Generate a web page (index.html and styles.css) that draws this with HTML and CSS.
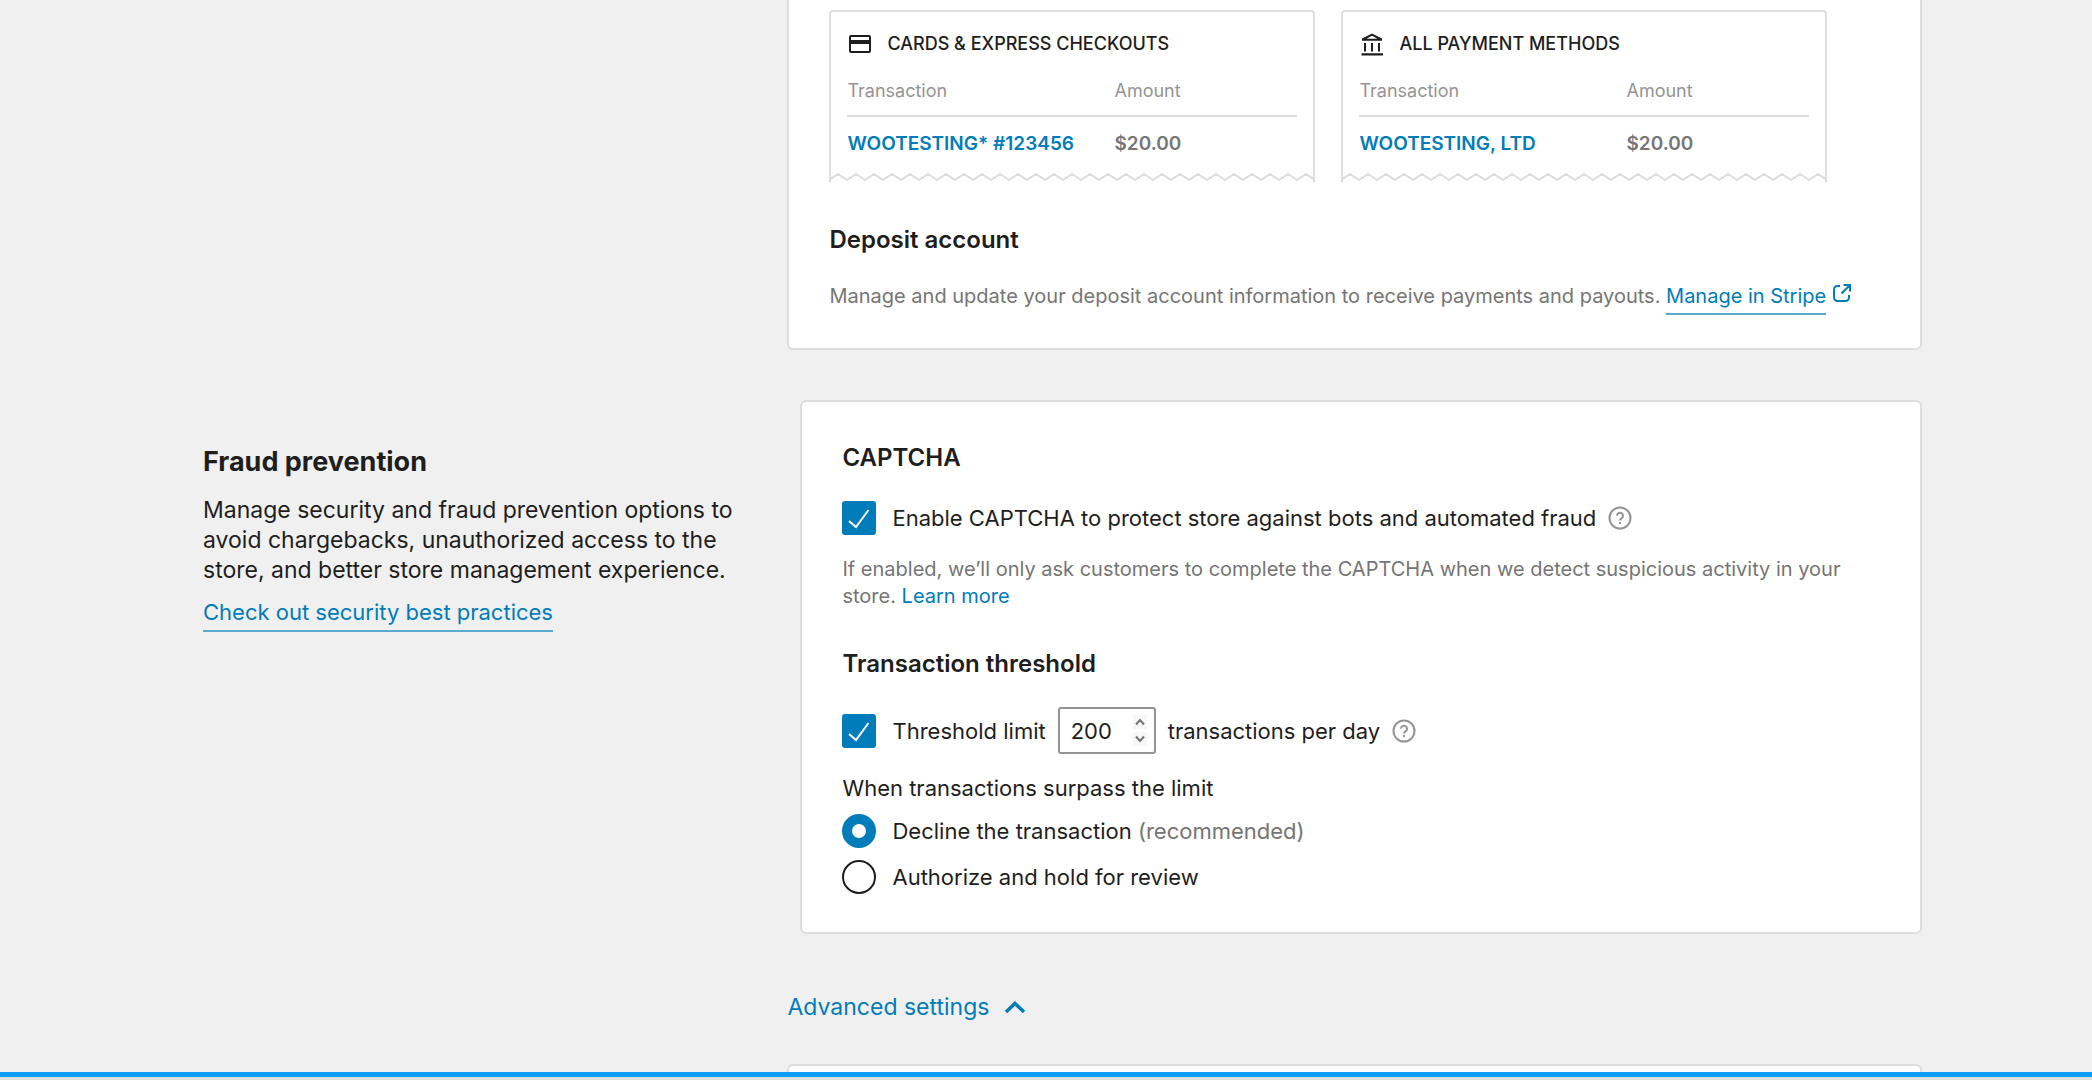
FILE: index.html
```html
<!DOCTYPE html>
<html lang="en">

<head>
    <meta charset="UTF-8">
    <meta name="viewport" content="width=device-width, initial-scale=1.0">
    <title>Payments settings</title>
    <link rel="stylesheet" href="styles.css">
</head>

<body>

    <main class="page">
        <!-- Deposits -->
        <section class="section">
            <div class="section-main">
                <div class="card card-continued">
                    <div class="receipts">
                        <div class="receipt">
                            <h4 class="receipt-title">
                                <svg class="icon" viewBox="0 0 26 26" width="26" height="26" aria-hidden="true">
                                    <path fill="currentColor" fill-rule="evenodd" d="M4 4h18a2 2 0 0 1 2 2v14a2 2 0 0 1-2 2H4a2 2 0 0 1-2-2V6a2 2 0 0 1 2-2zM4 6v3h18V6zM4 13v7h18v-7z"/>
                                </svg>
                                CARDS &amp; EXPRESS CHECKOUTS
                            </h4>
                            <table class="receipt-table">
                                <thead>
                                    <tr><th>Transaction</th><th>Amount</th></tr>
                                </thead>
                                <tbody>
                                    <tr><td class="descriptor">WOOTESTING* #123456</td><td>$20.00</td></tr>
                                </tbody>
                            </table>
                            <svg class="zigzag" aria-hidden="true">
                                <defs>
                                    <pattern id="teeth" width="18" height="10" patternUnits="userSpaceOnUse">
                                        <path d="M-9 2L0 8L9 2L18 8L27 2" fill="none" stroke="#ddd" stroke-width="2" stroke-linejoin="round"/>
                                    </pattern>
                                </defs>
                                <rect width="100%" height="10" fill="url(#teeth)"/>
                            </svg>
                        </div>

                        <div class="receipt">
                            <h4 class="receipt-title">
                                <svg class="icon" viewBox="0 0 26 26" width="26" height="26" aria-hidden="true">
                                    <path fill="currentColor" fill-rule="evenodd" d="M13 2.500L23 7.500V9.800H3V7.500zM13 4.800L7.500 7.800H18.500zM5 12h2v8.500H5zM12 12h2v8.500h-2zM19 12h2v8.500h-2zM2.500 22.200h21.500v2.300H2.500z"/>
                                </svg>
                                ALL PAYMENT METHODS
                            </h4>
                            <table class="receipt-table">
                                <thead>
                                    <tr><th>Transaction</th><th>Amount</th></tr>
                                </thead>
                                <tbody>
                                    <tr><td class="descriptor">WOOTESTING, LTD</td><td>$20.00</td></tr>
                                </tbody>
                            </table>
                            <svg class="zigzag" aria-hidden="true">
                                <rect width="100%" height="10" fill="url(#teeth)"/>
                            </svg>
                        </div>
                    </div>

                    <h3 class="card-title">Deposit account</h3>
                    <p class="help-text">
                        Manage and update your deposit account information to receive payments and payouts.
                        <a class="link-underlined" href="#">Manage in Stripe</a>
                        <svg class="external" viewBox="0 0 20 20" width="20" height="20" aria-hidden="true">
                            <path d="M8 3H5.500A3.500 3.500 0 0 0 2 6.500v8A3.500 3.500 0 0 0 5.500 18h8A3.500 3.500 0 0 0 17 14.500V12M11.500 2H18V8.500M18 2L9.500 10.500" fill="none" stroke="currentColor" stroke-width="2"/>
                        </svg>
                    </p>
                </div>
            </div>
        </section>

        <!-- Fraud prevention -->
        <section class="section">
            <div class="section-info">
                <h2>Fraud prevention</h2>
                <p>Manage security and fraud prevention options to avoid chargebacks, unauthorized access to the store, and better store management experience.</p>
                <a class="link-underlined" href="#">Check out security best practices</a>
            </div>
            <div class="section-main section-main-inset">
                <div class="card">
                    <h3 class="card-title">CAPTCHA</h3>
                    <div class="field">
                        <input type="checkbox" class="checkbox" id="captcha" checked>
                        <label for="captcha">Enable CAPTCHA to protect store against bots and automated fraud</label>
                        <button type="button" class="help" aria-label="About CAPTCHA">
                            <svg viewBox="0 0 24 24" width="24" height="24" aria-hidden="true">
                                <circle cx="12" cy="12" r="10.500"/>
                                <path d="M9 9.700a3 3 0 1 1 4.500 2.600c-1 .6-1.500 1-1.500 2.200M12 16v2"/>
                            </svg>
                        </button>
                    </div>
                    <p class="help-text">If enabled, we’ll only ask customers to complete the CAPTCHA when we detect suspicious activity in your store. <a href="#">Learn more</a></p>

                    <h3 class="card-title card-title-spaced">Transaction threshold</h3>
                    <div class="field">
                        <input type="checkbox" class="checkbox" id="threshold" checked>
                        <label for="threshold">Threshold limit</label>
                        <span class="number">
                            <input type="number" id="limit" value="200" aria-label="Transactions per day">
                            <span class="stepper">
                                <button type="button" id="stepUp" aria-label="Increase">
                                    <svg viewBox="0 0 14 14" width="14" height="14" aria-hidden="true"><path d="M3 9.500L7 5L11 9.500"/></svg>
                                </button>
                                <button type="button" id="stepDown" aria-label="Decrease">
                                    <svg viewBox="0 0 14 14" width="14" height="14" aria-hidden="true"><path d="M3 4.500L7 9L11 4.500"/></svg>
                                </button>
                            </span>
                        </span>
                        <label for="limit">transactions per day</label>
                        <button type="button" class="help" aria-label="About the threshold">
                            <svg viewBox="0 0 24 24" width="24" height="24" aria-hidden="true">
                                <circle cx="12" cy="12" r="10.500"/>
                                <path d="M9 9.700a3 3 0 1 1 4.500 2.600c-1 .6-1.500 1-1.500 2.200M12 16v2"/>
                            </svg>
                        </button>
                    </div>

                    <fieldset class="options">
                        <legend>When transactions surpass the limit</legend>
                        <div class="field">
                            <input type="radio" class="radio" name="surpass" id="decline" checked>
                            <label for="decline">Decline the transaction <span class="muted">(recommended)</span></label>
                        </div>
                        <div class="field">
                            <input type="radio" class="radio" name="surpass" id="hold">
                            <label for="hold">Authorize and hold for review</label>
                        </div>
                    </fieldset>
                </div>
            </div>
        </section>

        <!-- Advanced settings -->
        <section class="section section-last">
            <div class="section-main">
                <button type="button" class="toggle">
                    Advanced settings
                    <svg viewBox="0 0 22 14" width="22" height="14" aria-hidden="true">
                        <path d="M2 12L11 3.500L20 12" fill="none" stroke="currentColor" stroke-width="3.500"/>
                    </svg>
                </button>
                <div class="card card-cut"></div>
            </div>
        </section>
    </main>

    <footer class="bottom-bar"></footer>

    <script>
        const limit = document.getElementById('limit');

        document.getElementById('stepUp').onclick = () => limit.stepUp();
        document.getElementById('stepDown').onclick = () => limit.stepDown();
    </script>
</body>

</html>
```
FILE: styles.css
```css
/* General styles */
* {
    box-sizing: border-box;
}

body {
    font-family: 'Inter', sans-serif;
    font-size: 22px;
    line-height: 30px;
    color: #1e1e1e;
    background-color: #f0f0f0;
    margin: 0;
    min-height: 100vh;
    display: flex;
    flex-direction: column;
}

h2,
h3,
h4,
p {
    margin: 0;
}

a {
    color: #007cba;
    text-decoration: none;
}

button {
    font: inherit;
    padding: 0;
    border: none;
    background: none;
    cursor: pointer;
}

svg {
    display: block;
    flex: none;
}

/* Page layout */
.page {
    flex: 1;
    display: flex;
    flex-direction: column;
    gap: 50px;
    padding: 0 170px 0 203px;
}

.section {
    display: flex;
}

.section-info {
    flex: 0 1 545px;
    padding-top: 45px;
}

.section-main {
    flex: 0 0 66%;
    margin-left: auto;
}

.section-main-inset {
    padding-left: 13px;
}

.section-info h2 {
    font-size: 27px;
    line-height: 34px;
    font-weight: 700;
    margin-bottom: 16px;
}

.section-info p {
    font-size: 23px;
    margin-bottom: 12px;
}

.link-underlined {
    border-bottom: 2px solid #5aa9d1;
    padding-bottom: 5px;
}

/* Cards */
.card {
    background-color: #fff;
    border: 2px solid #ddd;
    border-radius: 6px;
    padding: 40px 40px 38px;
}

.card-continued {
    border-top: none;
    border-radius: 0 0 6px 6px;
    padding-top: 10px;
}

.card-title {
    font-size: 24px;
    line-height: 32px;
    font-weight: 600;
    margin-bottom: 27px;
}

.card-title-spaced {
    margin-top: 38px;
}

.help-text {
    font-size: 20px;
    line-height: 27px;
    color: #757575;
}

.external {
    display: inline-block;
    color: #007cba;
}

/* Receipt previews */
.receipts {
    display: flex;
    gap: 26px;
    margin-bottom: 42px;
}

.receipt {
    flex: 1;
    max-width: 486px;
    border: 2px solid #ddd;
    border-bottom: none;
    border-radius: 4px 4px 0 0;
    padding: 19px 16px 0;
}

.receipt-title {
    display: flex;
    align-items: center;
    gap: 14px;
    font-size: 18px;
    line-height: 26px;
    font-weight: 500;
}

.receipt-table {
    width: 100%;
    border-collapse: collapse;
    font-size: 18px;
    line-height: 26px;
    text-align: left;
    margin: 8px 0 3px;
}

.receipt-table th {
    font-weight: 400;
    color: #949494;
    padding: 13px 0 11px;
    border-bottom: 2px solid #ddd;
}

.receipt-table th:first-child {
    width: 267px;
}

.receipt-table td {
    font-size: 19px;
    font-weight: 600;
    color: #757575;
    padding: 14px 0 12px;
}

.receipt-table .descriptor {
    color: #007cba;
}

.zigzag {
    width: calc(100% + 36px);
    height: 10px;
    margin: 0 -18px;
}

/* Form fields */
.field {
    display: flex;
    align-items: center;
    gap: 12px;
}

.checkbox,
.radio {
    appearance: none;
    flex: none;
    width: 34px;
    height: 34px;
    margin: 0 4px 0 0;
    border: 2px solid #1e1e1e;
    background-color: #fff;
}

.checkbox {
    border-radius: 3px;
}

.checkbox:checked {
    border-color: #007cba;
    background: #007cba url("data:image/svg+xml,%3Csvg xmlns='http://www.w3.org/2000/svg' viewBox='0 0 30 30'%3E%3Cpath d='M5 18L12 24L24.500 7' fill='none' stroke='white' stroke-width='2'/%3E%3C/svg%3E") center / 30px no-repeat;
}

.radio {
    border-radius: 50%;
}

.radio:checked {
    border: 10px solid #007cba;
}

.help {
    color: #949494;
}

.help svg {
    fill: none;
    stroke: currentColor;
    stroke-width: 2;
}

.field + .help-text {
    margin-top: 21px;
}

.number {
    display: flex;
    align-items: center;
    width: 98px;
    height: 47px;
    padding: 0 7px 0 11px;
    border: 2px solid #949494;
    border-radius: 3px;
}

.number input {
    appearance: textfield;
    flex: 1;
    min-width: 0;
    padding: 0;
    border: none;
    outline: none;
    font: inherit;
    color: inherit;
    background: none;
}

.number input::-webkit-inner-spin-button {
    display: none;
}

.stepper {
    display: flex;
    flex-direction: column;
    gap: 3px;
}

.stepper button {
    background-color: #f6f7f7;
}

.stepper svg {
    fill: none;
    stroke: #757575;
    stroke-width: 2;
}

.options {
    border: none;
    margin: 19px 0 0;
    padding: 0;
}

.options legend {
    padding: 0;
    margin-bottom: 11px;
}

.options .field + .field {
    margin-top: 12px;
}

.muted {
    color: #757575;
}

/* Advanced settings */
.section-last {
    flex: 1;
}

.section-last .section-main {
    display: flex;
    flex-direction: column;
    align-items: stretch;
}

.toggle {
    display: flex;
    align-items: center;
    align-self: flex-start;
    gap: 15px;
    margin: 8px 0 42px;
    font-size: 23px;
    color: #007cba;
}

.card-cut {
    flex: 1;
    padding: 0;
    border-bottom: none;
    border-radius: 6px 6px 0 0;
}

/* Bar along the bottom edge */
.bottom-bar {
    height: 8px;
    border-top: 5px solid #0d9cf5;
    background-color: #e0e0e0;
}
```
